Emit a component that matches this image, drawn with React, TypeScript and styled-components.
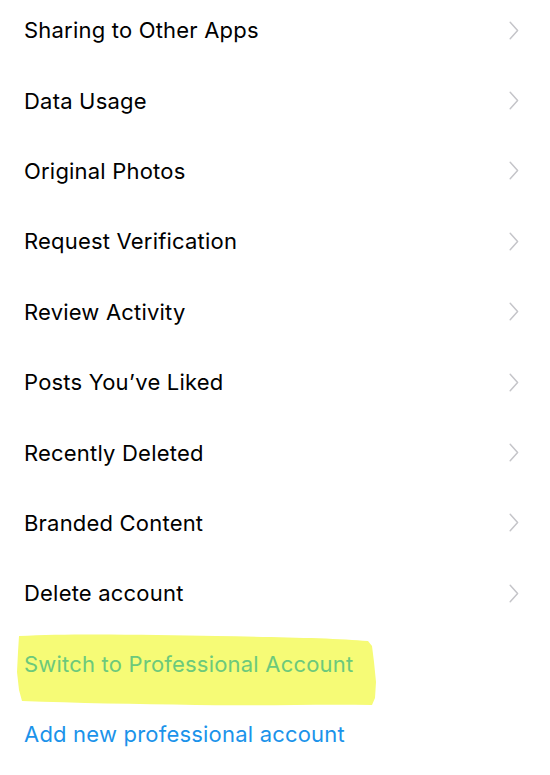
import React from "react";
import styled, { createGlobalStyle } from "styled-components";

const Global = createGlobalStyle`
  html, body { margin: 0; padding: 0; background: #ffffff; }
  body { font-family: Inter, "Liberation Sans", Arial, sans-serif; -webkit-font-smoothing: antialiased; }
`;

const Page = styled.div`
  width: 550px;
  height: 775px;
  overflow: hidden;
  background: #ffffff;
`;

const List = styled.div`
  display: flex;
  flex-direction: column;
  margin-top: -5px;
`;

const Row = styled.div`
  position: relative;
  height: 70.4px;
  display: flex;
  align-items: center;
  justify-content: space-between;
  padding: 0 31px 0 24px;
  box-sizing: border-box;
`;

const Label = styled.span<{ $tone?: "default" | "green" | "blue" }>`
  position: relative;
  z-index: 1;
  font-family: Inter, "Liberation Sans", Arial, sans-serif;
  font-size: 22px;
  font-weight: 400;
  letter-spacing: 0.2px;
  color: ${(p) =>
    p.$tone === "green" ? "#6cc97b" : p.$tone === "blue" ? "#1b93ea" : "#000000"};
`;

const Chevron = styled.svg`
  width: 10px;
  height: 19px;
  flex: none;
`;

const Highlight = styled.svg`
  position: absolute;
  left: 16px;
  top: 3px;
  width: 363px;
  height: 76px;
  z-index: 0;
`;

const items = [
  "Sharing to Other Apps",
  "Data Usage",
  "Original Photos",
  "Request Verification",
  "Review Activity",
  "Posts You\u2019ve Liked",
  "Recently Deleted",
  "Branded Content",
  "Delete account",
];

const ChevronIcon = () => (
  <Chevron viewBox="0 0 10 19">
    <path d="M1.2 1.2 L8.6 9.5 L1.2 17.8" fill="none" stroke="#c5c5c9" strokeWidth="1.5" strokeLinecap="round" strokeLinejoin="round" />
  </Chevron>
);

export default function App() {
  return (
    <Page>
      <Global />
      <List>
        {items.map((t) => (
          <Row key={t}>
            <Label>{t}</Label>
            <ChevronIcon />
          </Row>
        ))}
        <Row>
          <Highlight viewBox="0 0 363 76" preserveAspectRatio="none">
            <path
              d="M3 4 C60 1 140 3 200 4 C260 5 320 6 352 9 L356 14 L358 30 L360 50 L359 66 L356 73 C300 72 240 74 180 73 C120 72 60 71 6 69 L3 58 L1 40 L2 20 Z"
              fill="#f6fb76"
            />
          </Highlight>
          <Label $tone="green">Switch to Professional Account</Label>
        </Row>
        <Row>
          <Label $tone="blue">Add new professional account</Label>
        </Row>
      </List>
    </Page>
  );
}
